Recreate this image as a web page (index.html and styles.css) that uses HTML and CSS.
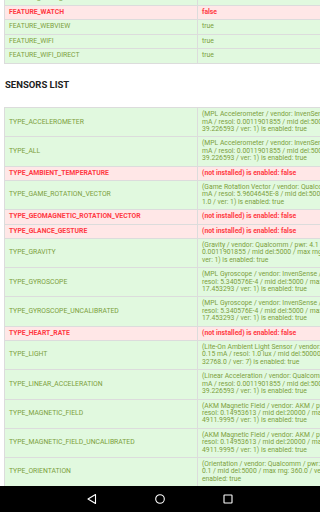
FILE: index.html
```html
<!DOCTYPE html>
<html lang="en">

<head>
  <meta charset="UTF-8">
  <meta name="viewport" content="width=device-width, initial-scale=1.0">
  <title>Device Info</title>
  <link rel="stylesheet" href="styles.css">
</head>

<body>

  <!-- Scrolled page content -->
  <main class="content">
    <div class="scroll">

      <!-- Features (tail of the list) -->
      <table class="info-table">
        <tr class="ok"><td class="key">FEATURE_VOICE_RECOGNIZERS</td><td class="val">true</td></tr>
        <tr class="missing"><td class="key">FEATURE_WATCH</td><td class="val">false</td></tr>
        <tr class="ok"><td class="key">FEATURE_WEBVIEW</td><td class="val">true</td></tr>
        <tr class="ok"><td class="key">FEATURE_WIFI</td><td class="val">true</td></tr>
        <tr class="ok"><td class="key">FEATURE_WIFI_DIRECT</td><td class="val">true</td></tr>
      </table>

      <h2 class="section-title">SENSORS LIST</h2>

      <table class="info-table">
        <tr class="ok">
          <td class="key">TYPE_ACCELEROMETER</td>
          <td class="val">(MPL Accelerometer / vendor: InvenSense / pwr: 0.5 mA / resol: 0.0011901855 / mid del:5000 / max rng: 39.226593 / ver: 1) is enabled: true</td>
        </tr>
        <tr class="ok">
          <td class="key">TYPE_ALL</td>
          <td class="val">(MPL Accelerometer / vendor: InvenSense / pwr: 0.5 mA / resol: 0.0011901855 / mid del:5000 / max rng: 39.226593 / ver: 1) is enabled: true</td>
        </tr>
        <tr class="missing">
          <td class="key">TYPE_AMBIENT_TEMPERATURE</td>
          <td class="val">(not installed) is enabled: false</td>
        </tr>
        <tr class="ok">
          <td class="key">TYPE_GAME_ROTATION_VECTOR</td>
          <td class="val">(Game Rotation Vector / vendor: Qualcomm / pwr: 4.1 mA / resol: 5.9604645E-8 / mid del:5000 / max rng: 1.0 / ver: 1) is enabled: true</td>
        </tr>
        <tr class="missing">
          <td class="key">TYPE_GEOMAGNETIC_ROTATION_VECTOR</td>
          <td class="val">(not installed) is enabled: false</td>
        </tr>
        <tr class="missing">
          <td class="key">TYPE_GLANCE_GESTURE</td>
          <td class="val">(not installed) is enabled: false</td>
        </tr>
        <tr class="ok">
          <td class="key">TYPE_GRAVITY</td>
          <td class="val">(Gravity / vendor: Qualcomm / pwr: 4.1 mA / resol: 0.0011901855 / mid del:5000 / max rng: 39.226593 / ver: 1) is enabled: true</td>
        </tr>
        <tr class="ok">
          <td class="key">TYPE_GYROSCOPE</td>
          <td class="val">(MPL Gyroscope / vendor: InvenSense / pwr: 0.5 mA / resol: 5.340576E-4 / mid del:5000 / max rng: 17.453293 / ver: 1) is enabled: true</td>
        </tr>
        <tr class="ok">
          <td class="key">TYPE_GYROSCOPE_UNCALIBRATED</td>
          <td class="val">(MPL Gyroscope / vendor: InvenSense / pwr: 0.5 mA / resol: 5.340576E-4 / mid del:5000 / max rng: 17.453293 / ver: 1) is enabled: true</td>
        </tr>
        <tr class="missing">
          <td class="key">TYPE_HEART_RATE</td>
          <td class="val">(not installed) is enabled: false</td>
        </tr>
        <tr class="ok">
          <td class="key">TYPE_LIGHT</td>
          <td class="val">(Lite-On Ambient Light Sensor / vendor: LSC / pwr: 0.15 mA / resol: 1.0 lux / mid del:50000 / max rng: 32768.0 / ver: 7) is enabled: true</td>
        </tr>
        <tr class="ok">
          <td class="key">TYPE_LINEAR_ACCELERATION</td>
          <td class="val">(Linear Acceleration / vendor: Qualcomm / pwr: 4.1 mA / resol: 0.0011901855 / mid del:5000 / max rng: 39.226593 / ver: 1) is enabled: true</td>
        </tr>
        <tr class="ok">
          <td class="key">TYPE_MAGNETIC_FIELD</td>
          <td class="val">(AKM Magnetic Field / vendor: AKM / pwr: 6.8 mA / resol: 0.14953613 / mid del:20000 / max rng: 4911.9995 / ver: 1) is enabled: true</td>
        </tr>
        <tr class="ok">
          <td class="key">TYPE_MAGNETIC_FIELD_UNCALIBRATED</td>
          <td class="val">(AKM Magnetic Field / vendor: AKM / pwr: 6.8 mA / resol: 0.14953613 / mid del:20000 / max rng: 4911.9995 / ver: 1) is enabled: true</td>
        </tr>
        <tr class="ok">
          <td class="key">TYPE_ORIENTATION</td>
          <td class="val">(Orientation / vendor: Qualcomm / pwr: 9.1 mA / resol: 0.1 / mid del:5000 / max rng: 360.0 / ver: 1) is enabled: true</td>
        </tr>
        <tr class="ok">
          <td class="key">TYPE_PRESSURE</td>
          <td class="val">(not installed) is enabled: true</td>
        </tr>
      </table>

    </div>
  </main>

  <!-- Android navigation bar -->
  <nav class="nav-bar">
    <svg class="nav-icon" width="12" height="12" viewBox="0 0 12 12">
      <polygon points="9.5,1.5 9.5,10.5 2,6" fill="none" stroke="#fff" stroke-width="1.1" stroke-linejoin="round" />
    </svg>
    <svg class="nav-icon" width="12" height="12" viewBox="0 0 12 12">
      <circle cx="6" cy="6" r="4.3" fill="none" stroke="#fff" stroke-width="1.1" />
    </svg>
    <svg class="nav-icon" width="12" height="12" viewBox="0 0 12 12">
      <rect x="2" y="2" width="8" height="8" rx="0.6" fill="none" stroke="#fff" stroke-width="1.1" />
    </svg>
  </nav>

</body>

</html>
```

FILE: styles.css
```css
/* Global */
html,
body {
  margin: 0;
  padding: 0;
}

body {
  width: 320px;
  height: 512px;
  display: flex;
  flex-direction: column;
  overflow: hidden;
  background-color: #ffffff;
  font-family: Roboto, "Noto Sans", Arial, sans-serif;
}

/* Scrolled content area */
.content {
  flex: 1;
  overflow: hidden;
}

.scroll {
  margin-top: -9.4px; /* page is scrolled a little */
  padding-left: 4px;
}

/* Info tables */
.info-table {
  border-collapse: collapse;
  table-layout: fixed;
  width: 364px;
  font-size: 6.8px;
  line-height: 7.4px;
}

.info-table td {
  border: 1px solid #dcdcdc;
  padding: 3px 4px 3px 4px;
  vertical-align: middle;
  overflow: hidden;
}

.info-table .key {
  width: 184px;
}

.info-table .val {
  width: 164px;
}

.info-table tr.ok td {
  background-color: #e1f9df; /* light green */
  color: #7c9f3c;
}

.info-table tr.missing td {
  background-color: #ffe7e7; /* light red */
  color: #ff3a44;
  font-weight: bold;
}

/* Section title */
.section-title {
  margin: 16.5px 0 17px 1px;
  font-size: 9.5px;
  line-height: 10px;
  font-weight: bold;
  color: #222222;
}

/* Navigation bar */
.nav-bar {
  height: 26px;
  flex-shrink: 0;
  background-color: #000000;
  display: flex;
  justify-content: center;
  align-items: center;
  gap: 56px;
}

.nav-icon {
  display: block;
}
```
